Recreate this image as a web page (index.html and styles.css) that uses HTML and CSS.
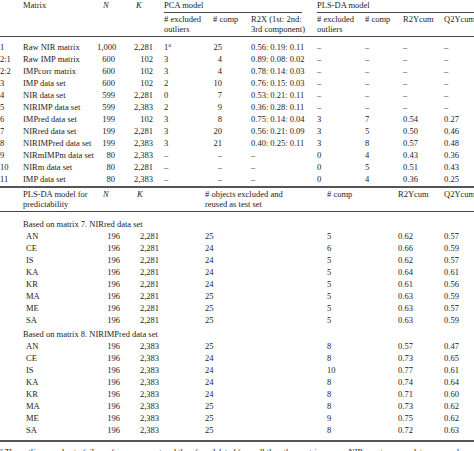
FILE: index.html
```html
<!DOCTYPE html>
<html>
<head>
<meta charset="utf-8">
<link rel="stylesheet" href="styles.css">
</head>
<body>
<div class="page">
<table class="tbl top">
  <colgroup>
    <col class="w-id"><col class="w-mat"><col class="w-n"><col class="w-k">
    <col class="w-ex"><col class="w-cp"><col class="w-r2x"><col class="w-ex2">
    <col class="w-cp2"><col class="w-r2y"><col class="w-q2y">
  </colgroup>
  <thead>
    <tr class="h1">
      <th></th>
      <th>Matrix</th>
      <th class="hn"><i>N</i></th>
      <th class="hk"><i>K</i></th>
      <th colspan="3"><div class="grp grp-pca">PCA model</div></th>
      <th colspan="4"><div class="grp">PLS-DA model</div></th>
    </tr>
    <tr class="h2">
      <th></th><th></th><th></th><th></th>
      <th># excluded<br>outliers</th>
      <th class="hcp"># comp</th>
      <th>R2X (1st: 2nd:<br>3rd component)</th>
      <th># excluded<br>outliers</th>
      <th># comp</th>
      <th>R2Ycum</th>
      <th>Q2Ycum</th>
    </tr>
  </thead>
  <tbody>
    <tr class="first"><td>1</td><td>Raw NIR matrix</td><td class="n">1,000</td><td class="k">2,281</td><td>1<sup>a</sup></td><td class="cp">25</td><td>0.56: 0.19: 0.11</td><td>–</td><td>–</td><td>–</td><td>–</td></tr>
    <tr><td>2:1</td><td>Raw IMP matrix</td><td class="n">600</td><td class="k">102</td><td>3</td><td class="cp">4</td><td>0.89: 0.08: 0.02</td><td>–</td><td>–</td><td>–</td><td>–</td></tr>
    <tr><td>2:2</td><td>IMPcorr matrix</td><td class="n">600</td><td class="k">102</td><td>3</td><td class="cp">4</td><td>0.78: 0.14: 0.03</td><td>–</td><td>–</td><td>–</td><td>–</td></tr>
    <tr><td>3</td><td>IMP data set</td><td class="n">600</td><td class="k">102</td><td>2</td><td class="cp">10</td><td>0.76: 0.15: 0.03</td><td>–</td><td>–</td><td>–</td><td>–</td></tr>
    <tr><td>4</td><td>NIR data set</td><td class="n">599</td><td class="k">2,281</td><td>0</td><td class="cp">7</td><td>0.53: 0.21: 0.11</td><td>–</td><td>–</td><td>–</td><td>–</td></tr>
    <tr><td>5</td><td>NIRIMP data set</td><td class="n">599</td><td class="k">2,383</td><td>2</td><td class="cp">9</td><td>0.36: 0.28: 0.11</td><td>–</td><td>–</td><td>–</td><td>–</td></tr>
    <tr><td>6</td><td>IMPred data set</td><td class="n">199</td><td class="k">102</td><td>3</td><td class="cp">8</td><td>0.75: 0.14: 0.04</td><td>3</td><td>7</td><td>0.54</td><td>0.27</td></tr>
    <tr><td>7</td><td>NIRred data set</td><td class="n">199</td><td class="k">2,281</td><td>3</td><td class="cp">20</td><td>0.56: 0.21: 0.09</td><td>3</td><td>5</td><td>0.50</td><td>0.46</td></tr>
    <tr><td>8</td><td>NIRIMPred data set</td><td class="n">199</td><td class="k">2,383</td><td>3</td><td class="cp">21</td><td>0.40: 0.25: 0.11</td><td>3</td><td>8</td><td>0.57</td><td>0.48</td></tr>
    <tr><td>9</td><td>NIRmIMPm data set</td><td class="n">80</td><td class="k">2,383</td><td>–</td><td class="cp">–</td><td>–</td><td>0</td><td>4</td><td>0.43</td><td>0.36</td></tr>
    <tr><td>10</td><td>NIRm data set</td><td class="n">80</td><td class="k">2,281</td><td>–</td><td class="cp">–</td><td>–</td><td>0</td><td>5</td><td>0.51</td><td>0.43</td></tr>
    <tr><td>11</td><td>IMP data set</td><td class="n">80</td><td class="k">2,383</td><td>–</td><td class="cp">–</td><td>–</td><td>0</td><td>4</td><td>0.36</td><td>0.25</td></tr>
  </tbody>
</table>

<table class="tbl bottom">
  <colgroup>
    <col class="b-id"><col class="b-lab"><col class="b-n"><col class="b-k">
    <col class="b-obj"><col class="b-cp"><col class="b-r2y"><col class="b-q2y">
  </colgroup>
  <thead>
    <tr class="h2">
      <th></th>
      <th>PLS-DA model for<br>predictability</th>
      <th class="hn"><i>N</i></th>
      <th class="bhk"><i>K</i></th>
      <th># objects excluded and<br>reused as test set</th>
      <th># comp</th>
      <th>R2Ycum</th>
      <th>Q2Ycum</th>
    </tr>
  </thead>
  <tbody>
    <tr class="grp-row first"><td></td><td colspan="7">Based on matrix 7. NIRred data set</td></tr>
    <tr><td></td><td class="lab">AN</td><td class="n">196</td><td class="bk">2,281</td><td>25</td><td>5</td><td>0.62</td><td>0.57</td></tr>
    <tr><td></td><td class="lab">CE</td><td class="n">196</td><td class="bk">2,281</td><td>24</td><td>6</td><td>0.66</td><td>0.59</td></tr>
    <tr><td></td><td class="lab">IS</td><td class="n">196</td><td class="bk">2,281</td><td>24</td><td>5</td><td>0.62</td><td>0.57</td></tr>
    <tr><td></td><td class="lab">KA</td><td class="n">196</td><td class="bk">2,281</td><td>24</td><td>5</td><td>0.64</td><td>0.61</td></tr>
    <tr><td></td><td class="lab">KR</td><td class="n">196</td><td class="bk">2,281</td><td>24</td><td>5</td><td>0.61</td><td>0.56</td></tr>
    <tr><td></td><td class="lab">MA</td><td class="n">196</td><td class="bk">2,281</td><td>25</td><td>5</td><td>0.63</td><td>0.59</td></tr>
    <tr><td></td><td class="lab">ME</td><td class="n">196</td><td class="bk">2,281</td><td>25</td><td>5</td><td>0.63</td><td>0.57</td></tr>
    <tr><td></td><td class="lab">SA</td><td class="n">196</td><td class="bk">2,281</td><td>25</td><td>5</td><td>0.63</td><td>0.59</td></tr>
    <tr class="grp-row"><td></td><td colspan="7">Based on matrix 8. NIRIMPred data set</td></tr>
    <tr><td></td><td class="lab">AN</td><td class="n">196</td><td class="bk">2,383</td><td>25</td><td>8</td><td>0.57</td><td>0.47</td></tr>
    <tr><td></td><td class="lab">CE</td><td class="n">196</td><td class="bk">2,383</td><td>24</td><td>8</td><td>0.73</td><td>0.65</td></tr>
    <tr><td></td><td class="lab">IS</td><td class="n">196</td><td class="bk">2,383</td><td>24</td><td>10</td><td>0.77</td><td>0.61</td></tr>
    <tr><td></td><td class="lab">KA</td><td class="n">196</td><td class="bk">2,383</td><td>24</td><td>8</td><td>0.74</td><td>0.64</td></tr>
    <tr><td></td><td class="lab">KR</td><td class="n">196</td><td class="bk">2,383</td><td>24</td><td>8</td><td>0.71</td><td>0.60</td></tr>
    <tr><td></td><td class="lab">MA</td><td class="n">196</td><td class="bk">2,383</td><td>25</td><td>8</td><td>0.73</td><td>0.62</td></tr>
    <tr><td></td><td class="lab">ME</td><td class="n">196</td><td class="bk">2,383</td><td>25</td><td>9</td><td>0.75</td><td>0.62</td></tr>
    <tr class="last"><td></td><td class="lab">SA</td><td class="n">196</td><td class="bk">2,383</td><td>25</td><td>8</td><td>0.72</td><td>0.63</td></tr>
  </tbody>
</table>
<p class="foot"><sup>a</sup> The outlier was due to failure of measurement and therefore deleted from all the other matrices were NIR spectroscopy data was used</p>
</div>
</body>
</html>
```
FILE: styles.css
```css
html, body {
  margin: 0;
  padding: 0;
  background: #ffffff;
}
body {
  font-family: "Liberation Serif", "Times New Roman", serif;
  font-size: 8.5px;
  color: #222222;
  overflow: hidden;
}
.page {
  width: 474px;
  height: 451px;
  overflow: hidden;
}
.tbl {
  width: 474px;
  table-layout: fixed;
  border-collapse: collapse;
  border-spacing: 0;
}
.tbl th, .tbl td {
  padding: 0;
  text-align: left;
  font-weight: normal;
  white-space: nowrap;
  vertical-align: top;
}
.tbl td { line-height: 12px; height: 12px; }
.tbl i { font-style: italic; }

/* top table columns */
.w-id { width: 23px; }
.w-mat { width: 74px; }
.w-n { width: 19px; }
.w-k { width: 48px; }
.w-ex { width: 46px; }
.w-cp { width: 41px; }
.w-r2x { width: 66px; }
.w-ex2 { width: 48px; }
.w-cp2 { width: 38px; }
.w-r2y { width: 41px; }
.w-q2y { width: 30px; }

.h1 th {
  line-height: 10px;
  padding-bottom: 2px;
}
.h1 .grp {
  border-bottom: 1px solid #444;
  padding-bottom: 2px;
  margin-bottom: -2px;
}
.h1 .grp-pca { margin-right: 15px; }
.h2 th {
  line-height: 10px;
  padding-top: 1px;
  padding-bottom: 2px;
  border-bottom: 1px solid #444;
}
.top .h2 th { border-bottom: 1px solid #444; }
.hn { padding-left: 6px !important; }
.hk { padding-left: 20px !important; }
.hcp { padding-left: 3px !important; }

.tbl td.n { text-align: right; padding-right: 1px; }
.tbl td.k { text-align: right; padding-right: 11px; }
.tbl td.cp { text-align: right; padding-right: 29px; }
.tbl tr.first td { padding-top: 4px; }
.top tbody tr:last-child td { padding-bottom: 1px; }
.top { border-bottom: 2px solid #555; }

sup {
  font-size: 6px;
  line-height: 0;
  vertical-align: 3px;
}

/* bottom table columns */
.b-id { width: 23px; }
.b-lab { width: 74px; }
.b-n { width: 24px; }
.b-k { width: 84px; }
.b-obj { width: 122px; }
.b-cp { width: 71px; }
.b-r2y { width: 46px; }
.b-q2y { width: 30px; }

.bhk { padding-left: 16px !important; }
.tbl td.bk { text-align: right; padding-right: 46px; }
.tbl td.lab { padding-left: 3px; }
.bottom tr.first td { padding-top: 6px; }
.bottom tr.grp-row:not(.first) td { padding-top: 2px; }
.bottom tr.last td { padding-bottom: 4px; }
.bottom { border-bottom: 2px solid #555; }

.foot {
  margin: 0;
  padding-top: 4px;
  line-height: 12px;
  white-space: nowrap;
}
.foot sup { vertical-align: 3px; }
```
